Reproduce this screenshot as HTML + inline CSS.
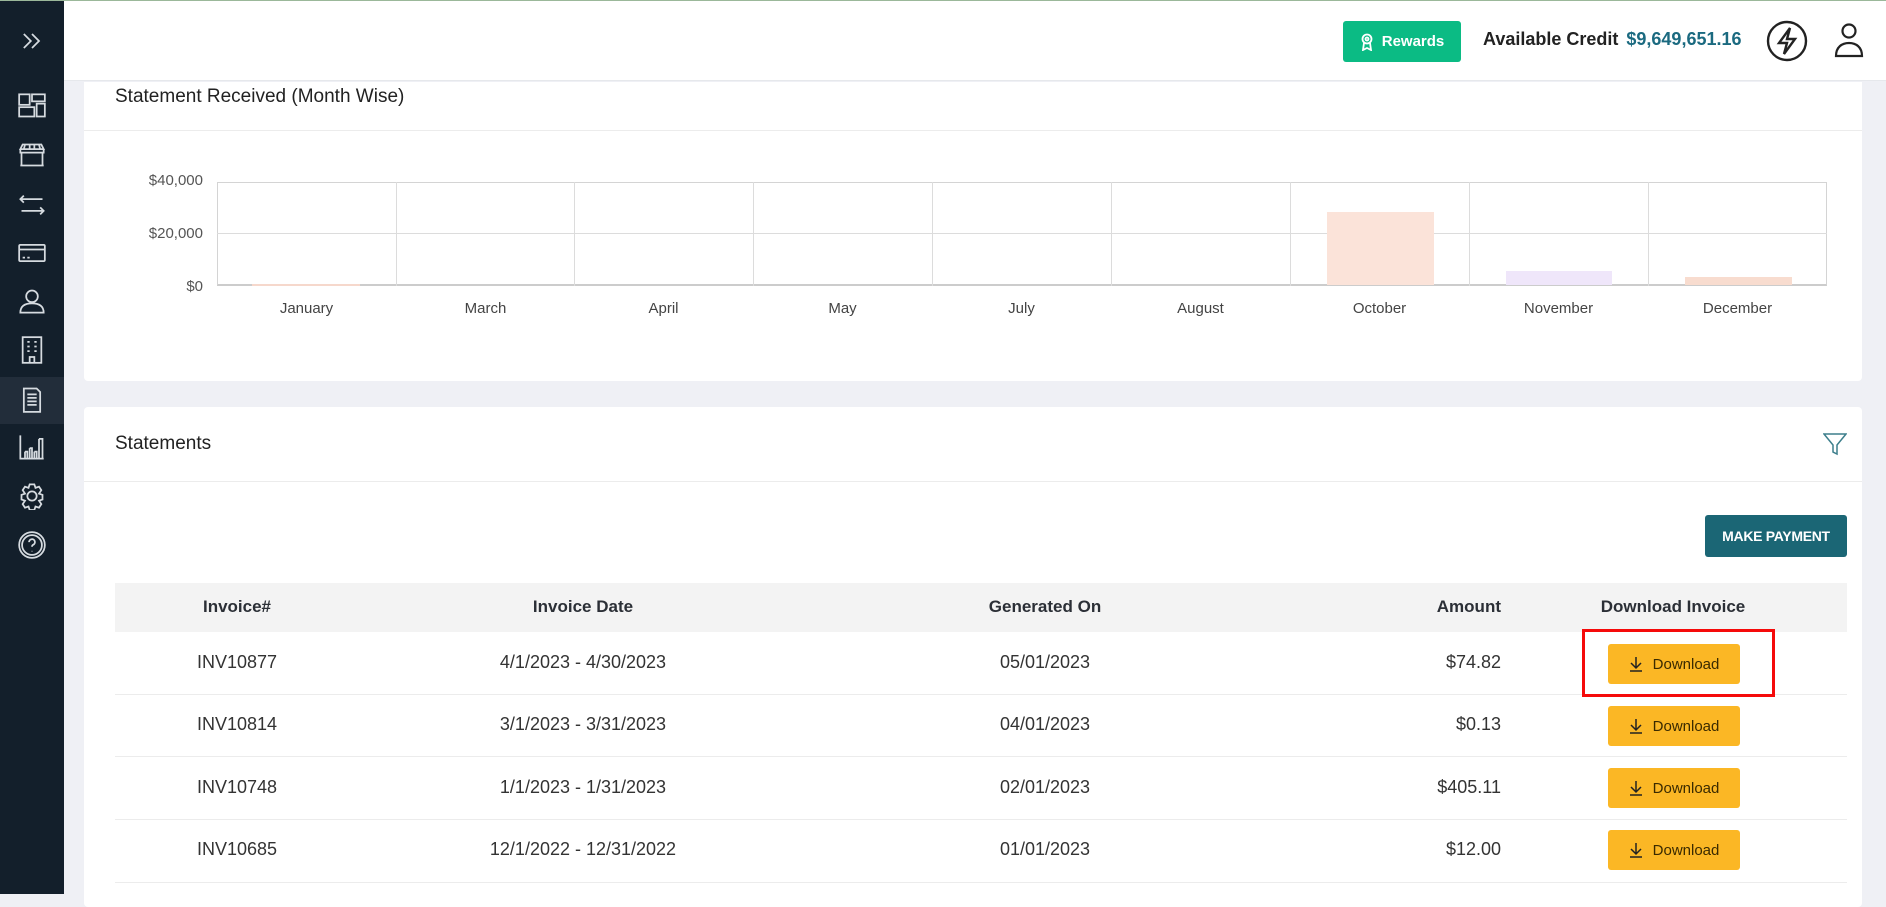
<!DOCTYPE html>
<html><head><meta charset="utf-8"><style>
*{margin:0;padding:0;box-sizing:border-box}
body{width:1886px;height:894px;overflow:hidden;background:#eff0f5;font-family:"Liberation Sans",sans-serif;color:#222;position:relative}
.abs{position:absolute}
#topline{left:0;top:0;width:1886px;height:1px;background:#9bb89a;z-index:5}
#side{left:0;top:0;width:64px;height:894px;background:#131f2b}
#side svg{position:absolute;left:18px;width:28px;height:28px;stroke:#d6dbe0;fill:none;stroke-width:1.5}
#head{left:64px;top:0;right:0;height:81px;background:#fff;border-bottom:1px solid #e6e8ec}
.card{background:#fff;border-radius:4px;position:absolute;left:84px;width:1778px}
.t{position:absolute;white-space:nowrap}
.ylab{font-size:15px;color:#555;text-align:right;width:90px;left:113px}
.mlab{font-size:15px;color:#444;text-align:center;width:179px;top:300px}
.th{font-weight:bold;font-size:17px;color:#2b2f36}
.td{font-size:18px;color:#333}
.dl{position:absolute;left:1608px;width:132px;height:40px;background:#fbb725;border-radius:3px;font-size:15px;color:#3a2a00;display:flex;align-items:center;justify-content:center;gap:10px}
.rowline{position:absolute;left:115px;width:1732px;height:1px;background:#ececec}
</style></head><body>
<div id="topline" class="abs"></div>
<div id="side" class="abs">
 <svg style="top:27px" viewBox="0 0 24 24" stroke-width="2.2"><path d="M5 6l6 6-6 6M12 6l6 6-6 6"/></svg>
 <div class="abs" style="left:0;top:377px;width:64px;height:47px;background:#222d3a"></div>
 <svg style="top:92px" viewBox="0 0 24 24"><rect x="1" y="2" width="9" height="9"/><rect x="12" y="2" width="11" height="6"/><rect x="1" y="13" width="13" height="8"/><rect x="16" y="10" width="7" height="11"/></svg>
 <svg style="top:141px" viewBox="0 0 24 24"><path d="M2 7l2-4h16l2 4zM2 7v3h20V7M3 10v11h18V10M2 21h20M6 3l-1 4M10 3v4M14 3v4M18 3l1 4"/></svg>
 <svg style="top:191px" viewBox="0 0 24 24"><path d="M5 4L2 7l3 3M2 7h19M19 14l3 3-3 3M22 17H3"/></svg>
 <svg style="top:239px" viewBox="0 0 24 24"><rect x="1" y="5" width="22" height="14" rx="1"/><path d="M1 9h22M4 16h2M8 16h2"/></svg>
 <svg style="top:287px" viewBox="0 0 24 24"><circle cx="12" cy="8" r="5"/><path d="M2 22c0-6 4-8 10-8s10 2 10 8z"/></svg>
 <svg style="top:336px" viewBox="0 0 24 24"><rect x="4" y="1" width="16" height="22"/><path d="M8 5h2M14 5h2M8 9h2M14 9h2M8 13h2M14 13h2M10 23v-5h4v5"/></svg>
 <svg style="top:385px" viewBox="0 0 24 24"><path d="M5 3h11l3 3v17H5zM8 8h8M8 11h8M8 14h8M8 17h8"/></svg>
 <svg style="top:433px" viewBox="0 0 24 24"><path d="M2 2v20h20M6 22v-6M10 22v-9M14 22v-6M18 22V5M6 16h2v6M10 13h2v9M14 16h2v6M18 5h3v17"/></svg>
 <svg style="top:482px" viewBox="0 0 24 24"><circle cx="12" cy="12" r="4"/><path d="M10 2h4l1 3 3-1 2 3-2 3 3 1v4l-3 1 2 3-2 3-3-1-1 3h-4l-1-3-3 1-2-3 2-3-3-1v-4l3-1-2-3 2-3 3 1z"/></svg>
 <svg style="top:531px" viewBox="0 0 24 24"><circle cx="12" cy="12" r="11"/><circle cx="12" cy="12" r="8.5"/><path d="M9.5 9.5a2.5 2.5 0 1 1 3.5 2.3c-.7.4-1 .9-1 1.7M12 17v.5"/></svg>
</div>
<div id="head" class="abs">
 <div class="abs" style="left:1279px;top:21px;width:118px;height:41px;background:#0bbb84;border-radius:3px;color:#fff;font-weight:bold;font-size:15px;display:flex;align-items:center;justify-content:center;gap:8px">
  <svg width="14" height="18" viewBox="0 0 14 18" fill="none" stroke="#fff" stroke-width="1.8"><circle cx="7" cy="6" r="4.5"/><circle cx="7" cy="6" r="1.5"/><path d="M4 10l-1 7 4-2 4 2-1-7"/></svg>Rewards</div>
 <div class="t" style="left:1419px;top:29px;font-size:18px;font-weight:bold;color:#222">Available Credit <span style="color:#1b6a80;margin-left:3px">$9,649,651.16</span></div>
 <svg class="abs" style="left:1702px;top:20px" width="42" height="42" viewBox="0 0 42 42" fill="none" stroke="#222" stroke-width="2.4"><circle cx="21" cy="21" r="19"/><path d="M24 8L13 23h8l-3 11 11-15h-8z"/></svg>
 <svg class="abs" style="left:1770px;top:22px" width="30" height="36" viewBox="0 0 30 36" fill="none" stroke="#222" stroke-width="2.2"><circle cx="15" cy="9" r="6.5"/><path d="M2 34c0-9 6-13 13-13s13 4 13 13z"/></svg>
</div>
<div class="card" style="top:82px;height:299px;border-radius:0 0 4px 4px">
 <div class="t" style="left:31px;top:4px;font-size:19px;color:#222">Statement Received (Month Wise)</div>
 <div class="abs" style="left:0;top:48px;width:1778px;height:1px;background:#ececec"></div>
</div>
<!-- chart -->
<div class="abs" style="left:217px;top:182px;width:1610px;height:104px;border:1px solid #d4d4d4;border-bottom:2px solid #ccc"></div>
<div class="abs" style="left:217px;top:233px;width:1610px;height:1px;background:#dcdcdc"></div>
<div id="vl"></div>
<div class="abs" style="left:396px;top:182px;width:1px;height:104px;background:#dcdcdc"></div>
<div class="abs" style="left:574px;top:182px;width:1px;height:104px;background:#dcdcdc"></div>
<div class="abs" style="left:753px;top:182px;width:1px;height:104px;background:#dcdcdc"></div>
<div class="abs" style="left:932px;top:182px;width:1px;height:104px;background:#dcdcdc"></div>
<div class="abs" style="left:1111px;top:182px;width:1px;height:104px;background:#dcdcdc"></div>
<div class="abs" style="left:1290px;top:182px;width:1px;height:104px;background:#dcdcdc"></div>
<div class="abs" style="left:1469px;top:182px;width:1px;height:104px;background:#dcdcdc"></div>
<div class="abs" style="left:1648px;top:182px;width:1px;height:104px;background:#dcdcdc"></div>
<div class="abs" style="left:252px;top:284px;width:108px;height:2px;background:#f6d8cc"></div>
<div class="abs" style="left:1327px;top:212px;width:107px;height:73px;background:#fbe3d9"></div>
<div class="abs" style="left:1506px;top:271px;width:106px;height:14px;background:#efe6fa"></div>
<div class="abs" style="left:1685px;top:277px;width:107px;height:8px;background:#f8dccf"></div>
<div class="t ylab" style="top:172px">$40,000</div>
<div class="t ylab" style="top:225px">$20,000</div>
<div class="t ylab" style="top:278px">$0</div>
<div class="t mlab" style="left:217px">January</div>
<div class="t mlab" style="left:396px">March</div>
<div class="t mlab" style="left:574px">April</div>
<div class="t mlab" style="left:753px">May</div>
<div class="t mlab" style="left:932px">July</div>
<div class="t mlab" style="left:1111px">August</div>
<div class="t mlab" style="left:1290px">October</div>
<div class="t mlab" style="left:1469px">November</div>
<div class="t mlab" style="left:1648px">December</div>

<div class="card" style="top:407px;height:500px">
 <div class="t" style="left:31px;top:26px;font-size:19px;color:#222">Statements</div>
 <svg class="abs" style="left:1739px;top:25px" width="24" height="24" viewBox="0 0 24 24" fill="none" stroke="#3d7f8c" stroke-width="1.5"><path d="M1 2h22l-9 11v9l-4-2v-7z"/></svg>
 <div class="abs" style="left:0;top:74px;width:1778px;height:1px;background:#ececec"></div>
</div>
<div class="abs" style="left:1705px;top:515px;width:142px;height:42px;background:#1b6675;border-radius:3px;color:#fff;font-weight:bold;font-size:14px;display:flex;align-items:center;justify-content:center;letter-spacing:-0.3px">MAKE PAYMENT</div>
<div class="abs" style="left:115px;top:583px;width:1732px;height:49px;background:#f3f3f3"></div>
<div class="t th" style="left:137px;width:200px;text-align:center;top:597px">Invoice#</div>
<div class="t th" style="left:433px;width:300px;text-align:center;top:597px">Invoice Date</div>
<div class="t th" style="left:895px;width:300px;text-align:center;top:597px">Generated On</div>
<div class="t th" style="left:1301px;width:200px;text-align:right;top:597px">Amount</div>
<div class="t th" style="left:1573px;width:200px;text-align:center;top:597px">Download Invoice</div>

<div class="rowline" style="top:694px"></div>
<div class="rowline" style="top:756px"></div>
<div class="rowline" style="top:819px"></div>
<div class="rowline" style="top:882px"></div>

<div class="t td" style="left:137px;width:200px;text-align:center;top:652px">INV10877</div>
<div class="t td" style="left:433px;width:300px;text-align:center;top:652px">4/1/2023 - 4/30/2023</div>
<div class="t td" style="left:895px;width:300px;text-align:center;top:652px">05/01/2023</div>
<div class="t td" style="left:1301px;width:200px;text-align:right;top:652px">$74.82</div>

<div class="t td" style="left:137px;width:200px;text-align:center;top:714px">INV10814</div>
<div class="t td" style="left:433px;width:300px;text-align:center;top:714px">3/1/2023 - 3/31/2023</div>
<div class="t td" style="left:895px;width:300px;text-align:center;top:714px">04/01/2023</div>
<div class="t td" style="left:1301px;width:200px;text-align:right;top:714px">$0.13</div>

<div class="t td" style="left:137px;width:200px;text-align:center;top:777px">INV10748</div>
<div class="t td" style="left:433px;width:300px;text-align:center;top:777px">1/1/2023 - 1/31/2023</div>
<div class="t td" style="left:895px;width:300px;text-align:center;top:777px">02/01/2023</div>
<div class="t td" style="left:1301px;width:200px;text-align:right;top:777px">$405.11</div>

<div class="t td" style="left:137px;width:200px;text-align:center;top:839px">INV10685</div>
<div class="t td" style="left:433px;width:300px;text-align:center;top:839px">12/1/2022 - 12/31/2022</div>
<div class="t td" style="left:895px;width:300px;text-align:center;top:839px">01/01/2023</div>
<div class="t td" style="left:1301px;width:200px;text-align:right;top:839px">$12.00</div>

<div class="dl" style="top:644px"><svg width="14" height="16" viewBox="0 0 14 16" fill="none" stroke="#222" stroke-width="1.5"><path d="M7 1v11M2 7l5 5 5-5M1 15h12"/></svg>Download</div>
<div class="dl" style="top:706px"><svg width="14" height="16" viewBox="0 0 14 16" fill="none" stroke="#222" stroke-width="1.5"><path d="M7 1v11M2 7l5 5 5-5M1 15h12"/></svg>Download</div>
<div class="dl" style="top:768px"><svg width="14" height="16" viewBox="0 0 14 16" fill="none" stroke="#222" stroke-width="1.5"><path d="M7 1v11M2 7l5 5 5-5M1 15h12"/></svg>Download</div>
<div class="dl" style="top:830px"><svg width="14" height="16" viewBox="0 0 14 16" fill="none" stroke="#222" stroke-width="1.5"><path d="M7 1v11M2 7l5 5 5-5M1 15h12"/></svg>Download</div>
<div class="abs" style="left:1582px;top:629px;width:193px;height:68px;border:3px solid #f50a0a"></div>
</body></html>
